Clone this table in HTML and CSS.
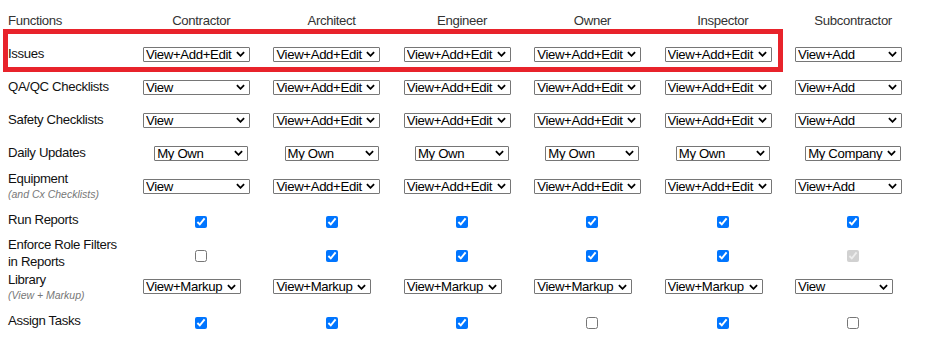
FILE: index.html
```html
<!DOCTYPE html>
<html lang="en">
<head>
<meta charset="utf-8">
<title>Role Permissions</title>
<link rel="stylesheet" href="styles.css">
</head>
<body>
<div class="matrix">
  <div class="row head">
    <div class="label">Functions</div>
    <div class="role">Contractor</div>
    <div class="role">Architect</div>
    <div class="role">Engineer</div>
    <div class="role">Owner</div>
    <div class="role">Inspector</div>
    <div class="role">Subcontractor</div>
  </div>

  <div class="row highlight">
    <div class="label">Issues</div>
    <div class="cell"><select class="w-full"><option>View</option><option>View+Add</option><option selected>View+Add+Edit</option></select></div>
    <div class="cell"><select class="w-full"><option>View</option><option>View+Add</option><option selected>View+Add+Edit</option></select></div>
    <div class="cell"><select class="w-full"><option>View</option><option>View+Add</option><option selected>View+Add+Edit</option></select></div>
    <div class="cell"><select class="w-full"><option>View</option><option>View+Add</option><option selected>View+Add+Edit</option></select></div>
    <div class="cell"><select class="w-full"><option>View</option><option>View+Add</option><option selected>View+Add+Edit</option></select></div>
    <div class="cell"><select class="w-full"><option>View</option><option selected>View+Add</option><option>View+Add+Edit</option></select></div>
  </div>

  <div class="row">
    <div class="label">QA/QC Checklists</div>
    <div class="cell"><select class="w-full"><option selected>View</option><option>View+Add</option><option>View+Add+Edit</option></select></div>
    <div class="cell"><select class="w-full"><option>View</option><option>View+Add</option><option selected>View+Add+Edit</option></select></div>
    <div class="cell"><select class="w-full"><option>View</option><option>View+Add</option><option selected>View+Add+Edit</option></select></div>
    <div class="cell"><select class="w-full"><option>View</option><option>View+Add</option><option selected>View+Add+Edit</option></select></div>
    <div class="cell"><select class="w-full"><option>View</option><option>View+Add</option><option selected>View+Add+Edit</option></select></div>
    <div class="cell"><select class="w-full"><option>View</option><option selected>View+Add</option><option>View+Add+Edit</option></select></div>
  </div>

  <div class="row">
    <div class="label">Safety Checklists</div>
    <div class="cell"><select class="w-full"><option selected>View</option><option>View+Add</option><option>View+Add+Edit</option></select></div>
    <div class="cell"><select class="w-full"><option>View</option><option>View+Add</option><option selected>View+Add+Edit</option></select></div>
    <div class="cell"><select class="w-full"><option>View</option><option>View+Add</option><option selected>View+Add+Edit</option></select></div>
    <div class="cell"><select class="w-full"><option>View</option><option>View+Add</option><option selected>View+Add+Edit</option></select></div>
    <div class="cell"><select class="w-full"><option>View</option><option>View+Add</option><option selected>View+Add+Edit</option></select></div>
    <div class="cell"><select class="w-full"><option>View</option><option selected>View+Add</option><option>View+Add+Edit</option></select></div>
  </div>

  <div class="row">
    <div class="label">Daily Updates</div>
    <div class="cell center"><select class="w-own"><option selected>My Own</option><option>My Company</option><option>All</option></select></div>
    <div class="cell center"><select class="w-own"><option selected>My Own</option><option>My Company</option><option>All</option></select></div>
    <div class="cell center"><select class="w-own"><option selected>My Own</option><option>My Company</option><option>All</option></select></div>
    <div class="cell center"><select class="w-own"><option selected>My Own</option><option>My Company</option><option>All</option></select></div>
    <div class="cell center"><select class="w-own"><option selected>My Own</option><option>My Company</option><option>All</option></select></div>
    <div class="cell center"><select class="w-company"><option>My Own</option><option selected>My Company</option><option>All</option></select></div>
  </div>

  <div class="row">
    <div class="label">Equipment<span class="note">(and Cx Checklists)</span></div>
    <div class="cell"><select class="w-full"><option selected>View</option><option>View+Add</option><option>View+Add+Edit</option></select></div>
    <div class="cell"><select class="w-full"><option>View</option><option>View+Add</option><option selected>View+Add+Edit</option></select></div>
    <div class="cell"><select class="w-full"><option>View</option><option>View+Add</option><option selected>View+Add+Edit</option></select></div>
    <div class="cell"><select class="w-full"><option>View</option><option>View+Add</option><option selected>View+Add+Edit</option></select></div>
    <div class="cell"><select class="w-full"><option>View</option><option>View+Add</option><option selected>View+Add+Edit</option></select></div>
    <div class="cell"><select class="w-full"><option>View</option><option selected>View+Add</option><option>View+Add+Edit</option></select></div>
  </div>

  <div class="row tall">
    <div class="label">Run Reports</div>
    <div class="cell center"><input type="checkbox" checked></div>
    <div class="cell center"><input type="checkbox" checked></div>
    <div class="cell center"><input type="checkbox" checked></div>
    <div class="cell center"><input type="checkbox" checked></div>
    <div class="cell center"><input type="checkbox" checked></div>
    <div class="cell center"><input type="checkbox" checked></div>
  </div>

  <div class="row">
    <div class="label">Enforce Role Filters<br>in Reports</div>
    <div class="cell center"><input type="checkbox"></div>
    <div class="cell center"><input type="checkbox" checked></div>
    <div class="cell center"><input type="checkbox" checked></div>
    <div class="cell center"><input type="checkbox" checked></div>
    <div class="cell center"><input type="checkbox" checked></div>
    <div class="cell center"><input type="checkbox" checked disabled></div>
  </div>

  <div class="row tall">
    <div class="label">Library<span class="note">(View + Markup)</span></div>
    <div class="cell"><select class="w-markup"><option>View</option><option selected>View+Markup</option></select></div>
    <div class="cell"><select class="w-markup"><option>View</option><option selected>View+Markup</option></select></div>
    <div class="cell"><select class="w-markup"><option>View</option><option selected>View+Markup</option></select></div>
    <div class="cell"><select class="w-markup"><option>View</option><option selected>View+Markup</option></select></div>
    <div class="cell"><select class="w-markup"><option>View</option><option selected>View+Markup</option></select></div>
    <div class="cell"><select class="w-markup"><option selected>View</option><option>View+Markup</option></select></div>
  </div>

  <div class="row tall">
    <div class="label">Assign Tasks</div>
    <div class="cell center"><input type="checkbox" checked></div>
    <div class="cell center"><input type="checkbox" checked></div>
    <div class="cell center"><input type="checkbox" checked></div>
    <div class="cell center"><input type="checkbox"></div>
    <div class="cell center"><input type="checkbox" checked></div>
    <div class="cell center"><input type="checkbox"></div>
  </div>
</div>
</body>
</html>
```
FILE: styles.css
```css
body {
  margin: 0;
  background: #fff;
  font-family: "Liberation Sans", Arial, sans-serif;
  font-size: 13.2px;
  letter-spacing: -0.35px;
  color: #111;
}

.matrix {
  padding: 4px 0 0 8px;
}

.row {
  position: relative;
  display: grid;
  grid-template-columns: 128px repeat(6, 130.4px);
  align-items: center;
  height: 33px;
}

.row.tall {
  height: 34px;
}

.head {
  color: #333;
}

.head .role {
  text-align: center;
  line-height: 17px;
}

.label {
  line-height: 17px;
}

.note {
  display: block;
  font-style: italic;
  font-size: 10.5px;
  line-height: 14px;
  letter-spacing: 0;
  color: #777;
}

.cell {
  display: flex;
  align-items: center;
  padding-left: 7px;
}

.cell.center {
  justify-content: center;
  padding-left: 0;
}

select {
  -webkit-appearance: none;
  appearance: none;
  box-sizing: border-box;
  height: 15px;
  margin: 1px 0 0;
  padding: 0 14px 0 2px;
  border: 1px solid #767676;
  border-radius: 1px;
  font: inherit;
  letter-spacing: inherit;
  line-height: 13px;
  color: #000;
  background: #fff url("data:image/svg+xml,%3Csvg xmlns='http://www.w3.org/2000/svg' viewBox='0 0 10 6'%3E%3Cpath d='M1 1l4 4 4-4' fill='none' stroke='%23000' stroke-width='2'/%3E%3C/svg%3E") no-repeat right 4px center / 9px 6px;
}

.w-full { width: 107px; }
.w-markup { width: 98px; }
.w-own { width: 94px; }
.w-company { width: 96px; }

input[type="checkbox"] {
  width: 12px;
  height: 12px;
  margin: 6px 0 0;
}

/* red frame calling out the Issues row */
.highlight::before {
  content: "";
  position: absolute;
  left: -5px;
  top: -8px;
  width: 780px;
  height: 43px;
  box-sizing: border-box;
  border: 5px solid #e8232b;
  pointer-events: none;
}
```
